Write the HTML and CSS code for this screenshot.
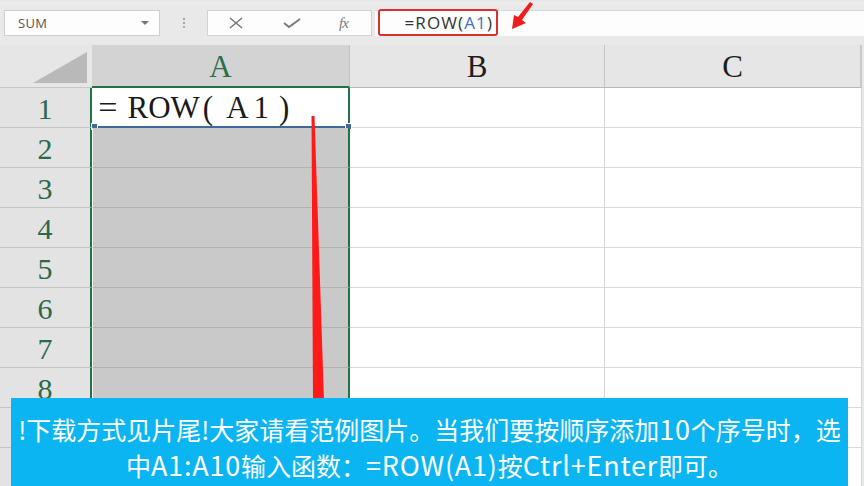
FILE: index.html
```html
<!DOCTYPE html>
<html lang="zh-CN">
<head>
<meta charset="utf-8">
<title>ROW</title>
<link rel="stylesheet" href="styles.css">
</head>
<body>
<div class="page">
  <div class="toolbar">
    <div class="namebox"><span class="nb-text">SUM</span><span class="nb-arrow"></span></div>
    <div class="dots"><span></span><span></span><span></span></div>
    <div class="fxbox">
      <svg class="ic" width="18" height="14" viewBox="0 0 18 14"><path d="M3 2 L15 12 M15 2 L3 12" stroke="#7a7a7a" stroke-width="1.6" fill="none"/></svg>
      <svg class="ic" width="20" height="14" viewBox="0 0 20 14"><path d="M2 7 L7 11 L18 3" stroke="#7a7a7a" stroke-width="2" fill="none"/></svg>
      <span class="fx">fx</span>
    </div>
    <div class="formula">
      <div class="redbox">=ROW(<span class="ref">A1</span>)</div>
    </div>
  </div>
  <div class="sheet">
    <div class="corner"><svg width="92" height="43" viewBox="0 0 92 43"><polygon points="33,38 87,38 87,7" fill="#b9b9b9"/></svg></div>
    <div class="ch active">A</div>
    <div class="ch">B</div>
    <div class="ch last">C</div>

    <div class="rh">1</div><div class="a a1"><span class="eq">=</span><span class="fn">ROW</span><span class="pl">(</span><span class="ca">A</span><span class="cn">1</span><span class="pr">)</span><span class="h hl"></span><span class="h hr"></span></div><div class="c"></div><div class="c"></div>
    <div class="rh">2</div><div class="a sel"></div><div class="c"></div><div class="c"></div>
    <div class="rh">3</div><div class="a sel"></div><div class="c"></div><div class="c"></div>
    <div class="rh">4</div><div class="a sel"></div><div class="c"></div><div class="c"></div>
    <div class="rh">5</div><div class="a sel"></div><div class="c"></div><div class="c"></div>
    <div class="rh">6</div><div class="a sel"></div><div class="c"></div><div class="c"></div>
    <div class="rh">7</div><div class="a sel"></div><div class="c"></div><div class="c"></div>
    <div class="rh">8</div><div class="a sel"></div><div class="c"></div><div class="c"></div>
    <div class="rh"></div><div class="a sel"></div><div class="c"></div><div class="c"></div>
    <div class="rh"></div><div class="a sel"></div><div class="c"></div><div class="c"></div>
  </div>

  <svg class="arrows" width="864" height="486" viewBox="0 0 864 486">
    <polygon points="311.5,116 314.5,116 324,400 313,400" fill="#ff1a1a"/>
    <polygon points="530,2 533,4 522,20 526,23 512,29 514,15 518,17" fill="#f01c1c"/>
  </svg>

  <div class="subtitle">
    <p>!下载方式见片尾!大家请看范例图片。当我们要按顺序添加<span class="lat">10</span>个序号时，选</p>
    <p>中<span class="lat">A1:A10</span>输入函数：<span class="lat">=ROW(A1)</span>按<span class="lat">Ctrl+Enter</span>即可。</p>
  </div>
</div>
</body>
</html>
```

FILE: styles.css
```css
html, body {
  margin: 0;
  padding: 0;
}
body {
  width: 864px;
  height: 486px;
  overflow: hidden;
  background: #e8e8e8;
  font-family: "Liberation Sans", "Noto Sans CJK SC", sans-serif;
}
.page {
  position: relative;
  width: 864px;
  height: 486px;
  overflow: hidden;
}
.toolbar {
  height: 45px;
  box-sizing: border-box;
  padding-top: 10px;
  display: flex;
  align-items: flex-start;
  background: linear-gradient(#e4e4e4 0, #eeeeee 3px, #e9e9e9 6px, #e9e9e9 100%);
}
.namebox {
  margin-left: 4px;
  width: 156px;
  height: 26px;
  box-sizing: border-box;
  background: #fdfdfd;
  border: 1px solid #cfcfcf;
  display: flex;
  align-items: center;
  justify-content: space-between;
  padding: 0 10px 0 13px;
}
.nb-text {
  font-family: "Open Sans", "Liberation Sans", sans-serif;
  font-size: 13px;
  color: #555;
  letter-spacing: 0.3px;
}
.nb-arrow {
  width: 0;
  height: 0;
  border-left: 4px solid transparent;
  border-right: 4px solid transparent;
  border-top: 4px solid #777;
}
.dots {
  width: 47px;
  height: 26px;
  display: flex;
  flex-direction: column;
  align-items: center;
  justify-content: center;
  gap: 2px;
}
.dots span {
  width: 2px;
  height: 2px;
  background: #a8a8a8;
}
.fxbox {
  width: 165px;
  height: 26px;
  box-sizing: border-box;
  background: #fdfdfd;
  border: 1px solid #d2d2d2;
  display: flex;
  align-items: center;
  padding-left: 19px;
  gap: 37px;
}
.fx {
  font-family: "Liberation Serif", serif;
  font-style: italic;
  font-size: 15px;
  color: #777;
  letter-spacing: -1px;
}
.formula {
  margin-left: 3px;
  flex: 1;
  height: 26px;
  background: #fdfdfd;
  border-top: 1px solid #d8d8d8;
  box-sizing: border-box;
  display: flex;
  align-items: center;
}
.redbox {
  margin-left: 3px;
  margin-top: -2px;
  width: 120px;
  height: 27px;
  box-sizing: border-box;
  border: 2px solid #d9302e;
  border-radius: 3px;
  display: flex;
  align-items: center;
  justify-content: flex-end;
  padding-right: 3px;
  font-family: "Open Sans", "Liberation Sans", sans-serif;
  font-size: 17px;
  color: #333;
  letter-spacing: 1.1px;
  white-space: nowrap;
}
.ref {
  color: #3f72b8;
}
.sheet {
  display: grid;
  grid-template-columns: 92px 258px 255px 257px;
  grid-template-rows: 43px repeat(10, 40px);
}
.corner {
  background: #e6e6e6;
  border-bottom: 1px solid #c6c6c6;
}
.corner svg {
  display: block;
}
.ch {
  background: #e6e6e6;
  border-bottom: 1px solid #b8b8b8;
  border-right: 1px solid #c4c4c4;
  display: flex;
  align-items: center;
  justify-content: center;
  font-family: "Liberation Serif", serif;
  font-size: 31px;
  color: #1e1e1e;
  padding-top: 2px;
  box-sizing: border-box;
}
.ch.active {
  background: #d3d3d3;
  border-bottom: 2px solid #217346;
  color: #2b6e4c;
}
.ch.last {
  border-right: 2px solid #c8c8c8;
}
.rh {
  background: #e3e3e3;
  border-bottom: 1px solid #c5c5c5;
  border-right: 2px solid #217346;
  box-sizing: border-box;
  display: flex;
  align-items: center;
  justify-content: center;
  font-family: "Liberation Serif", serif;
  font-size: 30px;
  color: #2a6a4a;
  padding-top: 2px;
}
.a {
  box-sizing: border-box;
  border-left: 1px solid #ffffff;
  border-right: 2px solid #217346;
  position: relative;
}
.a1 {
  background: #ffffff;
  border-bottom: 2px solid #3e679c;
  font-family: "Liberation Serif", serif;
  font-size: 31px;
  color: #1a1a1a;
  display: flex;
  align-items: center;
  padding-left: 6px;
  padding-top: 2px;
}
.eq { margin-right: 11px; transform: scaleX(1.1); }
.pl { margin-left: 3px; margin-right: 13px; transform: scaleY(1.1); }
.cn { margin-left: 5px; margin-right: 10px; }
.pr { transform: scaleY(1.1); }
.h {
  position: absolute;
  bottom: -4px;
  width: 5px;
  height: 5px;
  background: #3e679c;
  border: 1px solid #ffffff;
}
.hl { left: -2px; }
.hr { right: -4px; }
.sel {
  background: #c9c9c9;
  border-bottom: 1px solid #b2b2b2;
}
.c {
  background: #ffffff;
  border-bottom: 1px solid #dadada;
  border-right: 1px solid #d6d6d6;
  box-sizing: border-box;
}
.arrows {
  position: absolute;
  left: 0;
  top: 0;
  pointer-events: none;
}
.subtitle {
  position: absolute;
  left: 11px;
  top: 398px;
  width: 837px;
  height: 90px;
  background: #0bb5f1;
  box-sizing: border-box;
  padding-top: 13px;
  text-align: center;
  color: #ffffff;
  font-family: "Noto Sans CJK SC", sans-serif;
  font-size: 25px;
  line-height: 35px;
}
.subtitle p {
  margin: 0;
  white-space: nowrap;
}
.lat {
  font-size: 27px;
  letter-spacing: 0.8px;
}
```
